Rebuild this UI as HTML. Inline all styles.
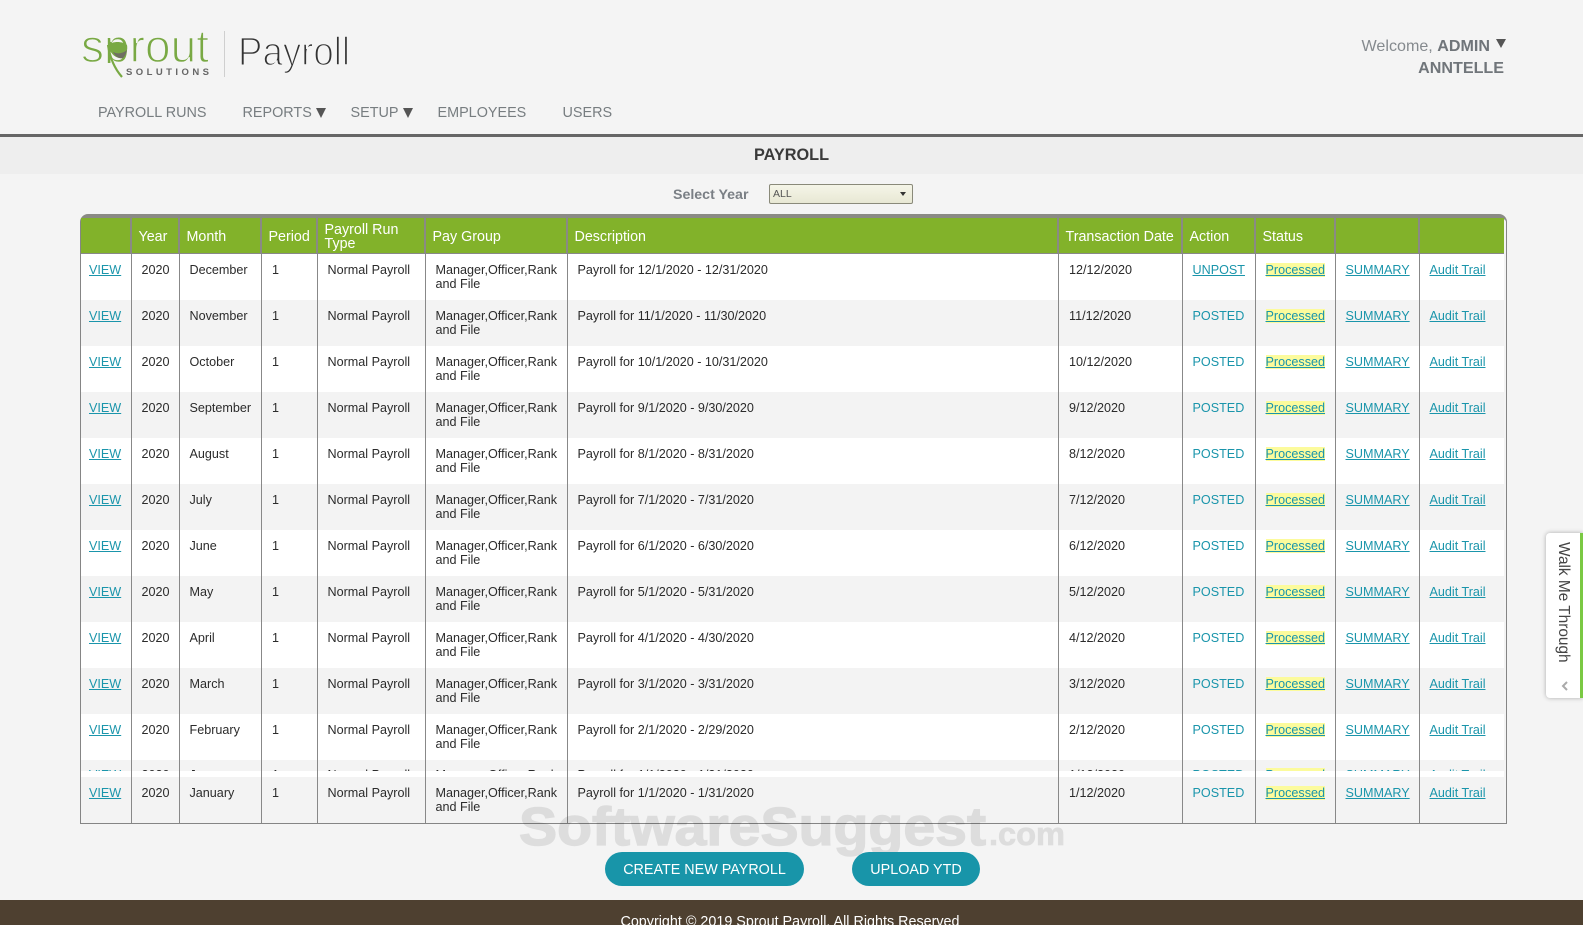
<!DOCTYPE html>
<html lang="en">
<head>
<meta charset="utf-8">
<title>Sprout Payroll</title>
<style>
html,body{margin:0;padding:0;width:1583px;height:925px;overflow:hidden;background:#f4f4f4;font-family:"Liberation Sans",Arial,sans-serif}
.a{position:absolute}
.nav{position:absolute;top:104px;height:18px;line-height:18px;font-size:14.4px;color:#777d80;white-space:nowrap}
.tri{position:absolute;width:0;height:0;border-left:4.5px solid transparent;border-right:4.5px solid transparent;border-top:9px solid #555}
table{border-collapse:collapse;table-layout:fixed;width:1423px;position:absolute;left:0}
td,th{padding:0;white-space:nowrap;overflow:hidden}
.d td{height:46px;padding-top:9px;box-sizing:border-box;vertical-align:top;font-size:12.6px;line-height:14px;color:#2b2b2b;padding-left:9.5px}
.d td:nth-child(1){padding-left:8px}
.d td:nth-child(4),.d td:nth-child(8){padding-left:10px}
.d tr:nth-child(12) td{padding-top:8px}
.d tr:nth-child(odd) td{background:#fff}
.d tr:nth-child(even) td{background:#f3f3f3}
.d.j tr td{background:#f3f3f3}
a{color:#1a95ab;text-decoration:underline}
.p{color:#1a95ab}
.y{background:#fcfb9c}
.h th{height:35px;background:#82b22a;color:#fff;font-weight:normal;font-size:14.3px;line-height:14px;text-align:left;padding-left:6.5px;padding-top:2px;box-sizing:border-box;vertical-align:middle}
.vl{position:absolute;top:254px;height:569px;width:1px;background:#888}
.vh{position:absolute;top:218px;height:35px;width:2px;background:#8a8a84}
.btn{position:absolute;top:852px;height:34px;line-height:36px;border-radius:17px;background:#1895a9;color:#fff;font-size:14.35px;text-align:center;white-space:nowrap}
</style>
</head>
<body>

<svg class="a" style="left:70px;top:20px" width="300" height="70" viewBox="70 20 300 70">
  <defs><clipPath id="c"><rect x="70" y="20" width="160" height="43"/></clipPath></defs>
  <g clip-path="url(#c)">
    <text x="81" y="62" font-family="Liberation Sans" font-size="46" textLength="128" lengthAdjust="spacing" fill="#79a944" stroke="#f5f5f5" stroke-width="1.4">sprout</text>
  </g>
  <path d="M108 45C110 58 114 68 122 77" fill="none" stroke="#79a944" stroke-width="2.2"/>
  <path d="M108 45C113 41 122 41 127 45C128 50 126 55 123 58C116 59 110 54 108 45Z" fill="#79a944"/>
  <path d="M113 52C117 54 122 54 127 50C126 54 125 56 123 58C118 59 115 56 113 52Z" fill="#6f6f62"/>
  <text x="126" y="75" font-family="Liberation Sans" font-weight="bold" font-size="9.5" textLength="83" lengthAdjust="spacing" fill="#666">SOLUTIONS</text>
  <rect x="224" y="31" width="1" height="46" fill="#cfcfcf"/>
  <text x="238" y="65" font-family="Liberation Sans" font-size="40" textLength="112" lengthAdjust="spacingAndGlyphs" fill="#333" stroke="#f5f5f5" stroke-width="1.6">Payroll</text>
</svg>

<div class="a" style="left:1300px;top:37px;width:190px;height:18px;line-height:18px;font-size:16.1px;color:#858a8e;text-align:right;white-space:nowrap">Welcome, <b style="color:#70757a">ADMIN</b></div>
<div class="tri" style="left:1496px;top:39px;border-left-width:5px;border-right-width:5px;border-top-width:9px"></div>
<div class="a" style="left:1300px;top:59px;width:204px;height:18px;line-height:18px;font-size:16.1px;font-weight:bold;color:#70757a;text-align:right;white-space:nowrap">ANNTELLE</div>

<div class="nav" style="left:98px">PAYROLL RUNS</div>
<div class="nav" style="left:242.5px">REPORTS</div>
<div class="tri" style="left:316px;top:108px;border-left-width:5px;border-right-width:5px;border-top-width:10px"></div>
<div class="nav" style="left:350.5px">SETUP</div>
<div class="tri" style="left:403px;top:108px;border-left-width:5px;border-right-width:5px;border-top-width:10px"></div>
<div class="nav" style="left:437.5px">EMPLOYEES</div>
<div class="nav" style="left:562.5px">USERS</div>

<div class="a" style="left:0;top:134px;width:1583px;height:3px;background:#666"></div>
<div class="a" style="left:0;top:137px;width:1583px;height:37px;background:#eeeeee;text-align:center;line-height:36px;font-size:16.3px;font-weight:bold;color:#3a3a3a">PAYROLL</div>

<div class="a" style="left:673px;top:186px;height:18px;line-height:18px;font-size:14.2px;font-weight:bold;color:#7a7f85;white-space:nowrap">Select Year</div>
<div class="a" style="left:769px;top:184px;width:144px;height:20px;box-sizing:border-box;border:1px solid #8a8a7a;border-radius:2px;background:linear-gradient(#f5f5e8,#e8e8d4);font-size:10.5px;line-height:19px;color:#555;padding-left:3px">ALL</div>
<div class="tri" style="left:900px;top:192px;border-left-width:3.5px;border-right-width:3.5px;border-top:4px solid #333"></div>

<!-- table frame -->
<div class="a" style="left:80px;top:214px;width:1427px;height:610px;box-sizing:border-box;border:1px solid #858585;border-top:4px solid #8a8a84;border-radius:8px 8px 0 0"></div>

<!-- header -->
<div class="a" style="left:81px;top:218px;width:1423px;height:36px;border-bottom:0">
<table class="h" style="top:0">
<colgroup><col style="width:51px"><col style="width:48px"><col style="width:82px"><col style="width:56px"><col style="width:108px"><col style="width:142px"><col style="width:491px"><col style="width:124px"><col style="width:73px"><col style="width:80px"><col style="width:84px"><col style="width:84px"></colgroup>
<tr><th></th><th>Year</th><th>Month</th><th>Period</th><th>Payroll Run<br>Type</th><th>Pay Group</th><th>Description</th><th>Transaction Date</th><th>Action</th><th>Status</th><th></th><th></th></tr>
</table>
</div>
<div class="a" style="left:81px;top:253px;width:1423px;height:1px;background:#888"></div>

<!-- body rows -->
<div class="a" style="left:81px;top:254px;width:1423px;height:517px;overflow:hidden">
<table class="d" style="top:0">
<colgroup><col style="width:51px"><col style="width:48px"><col style="width:82px"><col style="width:56px"><col style="width:108px"><col style="width:142px"><col style="width:491px"><col style="width:124px"><col style="width:73px"><col style="width:80px"><col style="width:84px"><col style="width:84px"></colgroup>
<tr><td><a>VIEW</a></td><td>2020</td><td>December</td><td>1</td><td>Normal Payroll</td><td>Manager,Officer,Rank<br>and File</td><td>Payroll for 12/1/2020 - 12/31/2020</td><td>12/12/2020</td><td><a>UNPOST</a></td><td><a class="y">Processed</a></td><td><a>SUMMARY</a></td><td><a>Audit Trail</a></td></tr>
<tr><td><a>VIEW</a></td><td>2020</td><td>November</td><td>1</td><td>Normal Payroll</td><td>Manager,Officer,Rank<br>and File</td><td>Payroll for 11/1/2020 - 11/30/2020</td><td>11/12/2020</td><td><span class="p">POSTED</span></td><td><a class="y">Processed</a></td><td><a>SUMMARY</a></td><td><a>Audit Trail</a></td></tr>
<tr><td><a>VIEW</a></td><td>2020</td><td>October</td><td>1</td><td>Normal Payroll</td><td>Manager,Officer,Rank<br>and File</td><td>Payroll for 10/1/2020 - 10/31/2020</td><td>10/12/2020</td><td><span class="p">POSTED</span></td><td><a class="y">Processed</a></td><td><a>SUMMARY</a></td><td><a>Audit Trail</a></td></tr>
<tr><td><a>VIEW</a></td><td>2020</td><td>September</td><td>1</td><td>Normal Payroll</td><td>Manager,Officer,Rank<br>and File</td><td>Payroll for 9/1/2020 - 9/30/2020</td><td>9/12/2020</td><td><span class="p">POSTED</span></td><td><a class="y">Processed</a></td><td><a>SUMMARY</a></td><td><a>Audit Trail</a></td></tr>
<tr><td><a>VIEW</a></td><td>2020</td><td>August</td><td>1</td><td>Normal Payroll</td><td>Manager,Officer,Rank<br>and File</td><td>Payroll for 8/1/2020 - 8/31/2020</td><td>8/12/2020</td><td><span class="p">POSTED</span></td><td><a class="y">Processed</a></td><td><a>SUMMARY</a></td><td><a>Audit Trail</a></td></tr>
<tr><td><a>VIEW</a></td><td>2020</td><td>July</td><td>1</td><td>Normal Payroll</td><td>Manager,Officer,Rank<br>and File</td><td>Payroll for 7/1/2020 - 7/31/2020</td><td>7/12/2020</td><td><span class="p">POSTED</span></td><td><a class="y">Processed</a></td><td><a>SUMMARY</a></td><td><a>Audit Trail</a></td></tr>
<tr><td><a>VIEW</a></td><td>2020</td><td>June</td><td>1</td><td>Normal Payroll</td><td>Manager,Officer,Rank<br>and File</td><td>Payroll for 6/1/2020 - 6/30/2020</td><td>6/12/2020</td><td><span class="p">POSTED</span></td><td><a class="y">Processed</a></td><td><a>SUMMARY</a></td><td><a>Audit Trail</a></td></tr>
<tr><td><a>VIEW</a></td><td>2020</td><td>May</td><td>1</td><td>Normal Payroll</td><td>Manager,Officer,Rank<br>and File</td><td>Payroll for 5/1/2020 - 5/31/2020</td><td>5/12/2020</td><td><span class="p">POSTED</span></td><td><a class="y">Processed</a></td><td><a>SUMMARY</a></td><td><a>Audit Trail</a></td></tr>
<tr><td><a>VIEW</a></td><td>2020</td><td>April</td><td>1</td><td>Normal Payroll</td><td>Manager,Officer,Rank<br>and File</td><td>Payroll for 4/1/2020 - 4/30/2020</td><td>4/12/2020</td><td><span class="p">POSTED</span></td><td><a class="y">Processed</a></td><td><a>SUMMARY</a></td><td><a>Audit Trail</a></td></tr>
<tr><td><a>VIEW</a></td><td>2020</td><td>March</td><td>1</td><td>Normal Payroll</td><td>Manager,Officer,Rank<br>and File</td><td>Payroll for 3/1/2020 - 3/31/2020</td><td>3/12/2020</td><td><span class="p">POSTED</span></td><td><a class="y">Processed</a></td><td><a>SUMMARY</a></td><td><a>Audit Trail</a></td></tr>
<tr><td><a>VIEW</a></td><td>2020</td><td>February</td><td>1</td><td>Normal Payroll</td><td>Manager,Officer,Rank<br>and File</td><td>Payroll for 2/1/2020 - 2/29/2020</td><td>2/12/2020</td><td><span class="p">POSTED</span></td><td><a class="y">Processed</a></td><td><a>SUMMARY</a></td><td><a>Audit Trail</a></td></tr>
<tr><td><a>VIEW</a></td><td>2020</td><td>January</td><td>1</td><td>Normal Payroll</td><td>Manager,Officer,Rank<br>and File</td><td>Payroll for 1/1/2020 - 1/31/2020</td><td>1/12/2020</td><td><span class="p">POSTED</span></td><td><a class="y">Processed</a></td><td><a>SUMMARY</a></td><td><a>Audit Trail</a></td></tr>
</table>
</div>

<!-- white band -->
<div class="a" style="left:81px;top:771px;width:1423px;height:6px;background:#fff"></div>

<!-- sticky last row -->
<div class="a" style="left:81px;top:777px;width:1423px;height:46px;overflow:hidden">
<table class="d j" style="top:0">
<colgroup><col style="width:51px"><col style="width:48px"><col style="width:82px"><col style="width:56px"><col style="width:108px"><col style="width:142px"><col style="width:491px"><col style="width:124px"><col style="width:73px"><col style="width:80px"><col style="width:84px"><col style="width:84px"></colgroup>
<tr><td><a>VIEW</a></td><td>2020</td><td>January</td><td>1</td><td>Normal Payroll</td><td>Manager,Officer,Rank<br>and File</td><td>Payroll for 1/1/2020 - 1/31/2020</td><td>1/12/2020</td><td><span class="p">POSTED</span></td><td><a class="y">Processed</a></td><td><a>SUMMARY</a></td><td><a>Audit Trail</a></td></tr>
</table>
</div>

<!-- column lines -->
<div class="vl" style="left:131px"></div><div class="vl" style="left:179px"></div><div class="vl" style="left:261px"></div><div class="vl" style="left:317px"></div><div class="vl" style="left:425px"></div><div class="vl" style="left:567px"></div><div class="vl" style="left:1058px"></div><div class="vl" style="left:1182px"></div><div class="vl" style="left:1255px"></div><div class="vl" style="left:1335px"></div><div class="vl" style="left:1419px"></div>
<div class="vh" style="left:130px"></div><div class="vh" style="left:178px"></div><div class="vh" style="left:260px"></div><div class="vh" style="left:316px"></div><div class="vh" style="left:424px"></div><div class="vh" style="left:566px"></div><div class="vh" style="left:1057px"></div><div class="vh" style="left:1181px"></div><div class="vh" style="left:1254px"></div><div class="vh" style="left:1334px"></div><div class="vh" style="left:1418px"></div>

<!-- watermark -->
<svg class="a" style="left:510px;top:795px" width="570" height="70" viewBox="510 795 570 70">
  <g opacity=".09" fill="#000" stroke="#000" font-family="Liberation Sans" font-weight="bold">
    <text x="519" y="845" font-size="54" textLength="467" lengthAdjust="spacingAndGlyphs" stroke-width="1.4">SoftwareSuggest</text>
    <text x="989" y="845" font-size="32" textLength="76" lengthAdjust="spacingAndGlyphs" stroke-width="0.8">.com</text>
  </g>
</svg>

<div class="btn" style="left:605px;width:199px">CREATE NEW PAYROLL</div>
<div class="btn" style="left:852px;width:128px">UPLOAD YTD</div>

<div class="a" style="left:0;top:900px;width:1583px;height:25px;background:#4e4030;overflow:hidden">
  <div style="position:absolute;left:0;width:1580px;top:13px;text-align:center;font-size:14.35px;line-height:18px;color:#fff;white-space:nowrap">Copyright © 2019 Sprout Payroll. All Rights Reserved</div>
</div>

<!-- walk me through -->
<div class="a" style="left:1546px;top:533px;width:37px;height:165px;box-sizing:border-box;background:#fff;border-right:3px solid #7ac943;border-radius:4px 0 0 4px;box-shadow:0 0 5px rgba(0,0,0,.3)">
  <div style="position:absolute;left:8px;top:9px;writing-mode:vertical-rl;font-size:15.4px;line-height:18px;color:#444;white-space:nowrap">Walk Me Through</div>
  <svg style="position:absolute;left:15px;top:147px" width="8" height="12" viewBox="0 0 8 12"><path d="M6 2L2 6L6 10" fill="none" stroke="#aaa" stroke-width="2"/></svg>
</div>

</body>
</html>
